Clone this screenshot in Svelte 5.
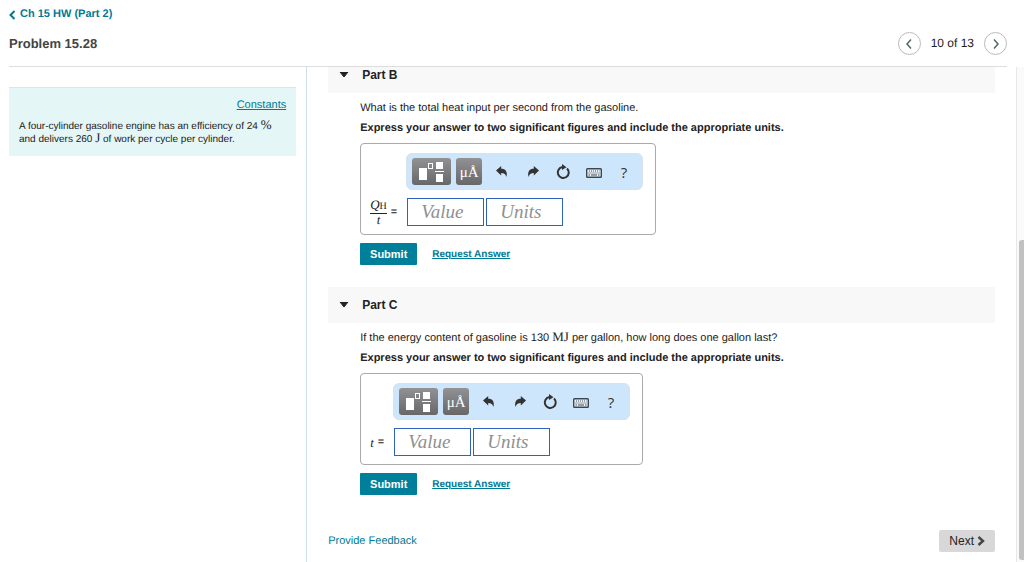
<script>
	const parts = [
		{ id: "b", title: "Part B", fraction: true },
		{ id: "c", title: "Part C", fraction: false }
	];

	let open = $state({ b: true, c: true });
	let answers = $state({
		b: { value: "", units: "" },
		c: { value: "", units: "" }
	});

	function clear(id) {
		answers[id] = { value: "", units: "" };
	}
</script>

{#snippet toolbar(id)}
	<div class="toolbar">
		<button class="dark wide" aria-label="Templates">
			<svg width="28" height="24" viewBox="0 0 28 24" fill="#fff">
				<rect x="1" y="8" width="8" height="12" />
				<rect x="10.5" y="3.5" width="4" height="5" fill="none" stroke="#fff" />
				<rect x="18" y="2" width="7" height="7" />
				<rect x="17" y="11" width="9" height="1" />
				<rect x="18" y="14" width="7" height="8" />
			</svg>
		</button>
		<button class="dark" aria-label="Units">μÅ</button>
		<button class="tool" aria-label="Undo">
			<svg width="16" height="16" viewBox="0 0 16 16">
				<path d="M2 6.5 7.2 2v2.7c4.2 0 6.5 2.600 5.300 8.300-.8-2.700-2.300-3.900-5.300-3.900v2.400z" fill="#333" />
			</svg>
		</button>
		<button class="tool" aria-label="Redo">
			<svg width="16" height="16" viewBox="0 0 16 16">
				<path d="M14 6.500 8.800 2v2.700C4.600 4.700 2.300 7.300 3.500 13c.8-2.700 2.300-3.900 5.300-3.900v2.400z" fill="#333" />
			</svg>
		</button>
		<button class="tool" aria-label="Reset" onclick={() => clear(id)}>
			<svg width="16" height="16" viewBox="0 0 16 16">
				<path d="M12 4.400A5.500 5.500 0 1 1 7.500 3" fill="none" stroke="#333" stroke-width="2" />
				<path d="M7 0v6l4.500-2.700z" fill="#333" />
			</svg>
		</button>
		<button class="tool" aria-label="Keyboard shortcuts">
			<svg width="16" height="16" viewBox="0 0 16 16">
				<rect x=".7" y="4.700" width="14.600" height="8.600" rx=".8" fill="#eef6fd" stroke="#3a4650" stroke-width="1.400" />
				<path d="M3 7h10.500M2.500 9h11" stroke="#3a4650" stroke-dasharray="1 1" />
				<path d="M2.500 11h1.500M5 11h6M12 11h1.500" stroke="#3a4650" />
			</svg>
		</button>
		<button class="tool help" aria-label="Help">?</button>
	</div>
{/snippet}

<div class="page">
	<header>
		<div>
			<a class="back" href="#assignment">
				<svg width="7" height="10" viewBox="0 0 7 10">
					<path d="M5.500 1 1.500 5l4 4" fill="none" stroke="#007a94" stroke-width="2" />
				</svg>
				Ch 15 HW (Part 2)
			</a>
			<h1>Problem 15.28</h1>
		</div>
		<nav>
			<button class="round" aria-label="Previous problem">
				<svg width="8" height="12" viewBox="0 0 8 12">
					<path d="M6 1.500 2 6l4 4.500" fill="none" stroke="#566" stroke-width="1.500" />
				</svg>
			</button>
			<span>10 of 13</span>
			<button class="round" aria-label="Next problem">
				<svg width="8" height="12" viewBox="0 0 8 12">
					<path d="m2 1.500 4 4.500-4 4.500" fill="none" stroke="#566" stroke-width="1.500" />
				</svg>
			</button>
		</nav>
	</header>

	<div class="body">
		<aside>
			<div class="intro">
				<a href="#constants">Constants</a>
				<p>
					A four-cylinder gasoline engine has an efficiency of 24&nbsp;<span class="math">%</span>
					and delivers 260 <span class="math">J</span> of work per cycle per cylinder.
				</p>
			</div>
		</aside>

		<main>
			{#each parts as part (part.id)}
				<section>
					<h2>
						<button onclick={() => (open[part.id] = !open[part.id])} aria-expanded={open[part.id]}>
							<svg width="10" height="6" viewBox="0 0 10 6"><path d="M1 0h8L5 5z" fill="#222" stroke="#222" stroke-linejoin="round" /></svg>
							{part.title}
						</button>
					</h2>
					{#if open[part.id]}
						<div class="content">
							{#if part.id === "b"}
								<p>What is the total heat input per second from the gasoline.</p>
							{:else}
								<p>
									If the energy content of gasoline is 130 <span class="math">MJ</span> per gallon, how long
									does one gallon last?
								</p>
							{/if}
							<p class="bold">Express your answer to two significant figures and include the appropriate units.</p>
							<div class="answer">
								{@render toolbar(part.id)}
								<label for="value-{part.id}">
									{#if part.fraction}
										<span class="fraction">
											<span><i>Q</i><small>H</small></span>
											<i>t</i>
										</span>
									{:else}
										<i>t</i>
									{/if}
									<span class="equals">=</span>
								</label>
								<div class="fields">
									<input id="value-{part.id}" placeholder="Value" bind:value={answers[part.id].value} />
									<input aria-label="Units" placeholder="Units" bind:value={answers[part.id].units} />
								</div>
							</div>
							<div class="actions">
								<button class="submit">Submit</button>
								<a href="#request-{part.id}">Request Answer</a>
							</div>
						</div>
					{/if}
				</section>
			{/each}

			<footer>
				<a href="#feedback">Provide Feedback</a>
				<button class="next">
					Next
					<svg width="8" height="10" viewBox="0 0 8 10">
						<path d="m1.500 1 4.500 4-4.500 4" fill="none" stroke="#444" stroke-width="2.400" />
					</svg>
				</button>
			</footer>
		</main>

		<div class="track"><div class="thumb"></div></div>
	</div>
</div>

<style>
	:global(body) {
		margin: 0;
		background: #fff;
	}

	.page {
		display: flex;
		flex-direction: column;
		height: 100vh;
		overflow: hidden;
		font: 11px/13px "Liberation Sans", Arial, sans-serif;
		text-rendering: geometricPrecision;
		color: #222;
	}

	button {
		padding: 0;
		border: 0;
		background: none;
		font: inherit;
		color: inherit;
		cursor: pointer;
	}

	svg {
		display: block;
	}

	a {
		color: #007a94;
	}

	p {
		margin: 0;
	}

	header {
		display: flex;
		align-items: flex-start;
		justify-content: space-between;
		margin: 0 17px 0 9px;
		padding: 7px 0 11px;
		border-bottom: 1px solid #ddd;
	}

	.back {
		display: flex;
		align-items: center;
		gap: 4px;
		font-size: 11px;
		line-height: 15px;
		font-weight: bold;
		text-decoration: none;
	}

	h1 {
		margin: 14px 0 0;
		font-size: 13px;
		line-height: 16px;
		color: #444;
	}

	nav {
		display: flex;
		align-items: center;
		gap: 10px;
		padding-top: 25px;
		font-size: 12px;
	}

	.round {
		display: grid;
		place-items: center;
		width: 23px;
		height: 23px;
		border: 1px solid #bbb;
		border-radius: 50%;
	}

	.body {
		display: flex;
		flex: 1;
		min-height: 0;
	}

	aside {
		flex: none;
		box-sizing: border-box;
		width: 30%;
		padding: 20px 10px 0 9px;
		border-right: 1px solid #cfdfe8;
	}

	.intro {
		padding: 11px 10px 10px;
		border-top: 1px solid #dde6e6;
		background: #e5f6f6;
	}

	.intro a {
		display: block;
		margin-bottom: 8px;
		text-align: right;
	}

	.intro p {
		font-size: 10px;
	}

	.math {
		font-family: "Liberation Serif", serif;
		font-size: 13px;
		line-height: 0;
	}

	main {
		flex: 1;
		min-width: 0;
		padding: 0 21px;
		overflow: hidden;
	}

	section {
		margin-bottom: 22px;
	}

	section:first-child {
		margin-top: -10px;
	}

	h2 {
		margin: 0;
		padding: 10px 11px;
		background: #f8f8f8;
		font-size: 12px;
		line-height: 16px;
	}

	h2 button {
		display: flex;
		align-items: center;
		gap: 13px;
	}

	.content {
		padding: 8px 32px 0;
	}

	.content p {
		margin-bottom: 6px;
		line-height: 14px;
	}

	.content .bold {
		margin-bottom: 8px;
		font-weight: bold;
	}

	.answer {
		display: inline-grid;
		grid-template-columns: auto auto;
		column-gap: 9px;
		row-gap: 8px;
		box-sizing: border-box;
		padding: 9px 12px 8px 9px;
		border: 1px solid #aaa;
		border-radius: 4px;
		vertical-align: top;
	}

	.toolbar {
		grid-column: 2;
		display: flex;
		align-items: center;
		box-sizing: border-box;
		width: 237px;
		height: 37px;
		padding: 0 3px 0 5px;
		border: 1px solid #d8e2ea;
		border-radius: 6px;
		background: #cde6fc;
	}

	.dark {
		display: grid;
		place-items: center;
		width: 26px;
		height: 27px;
		margin-right: 5px;
		border-radius: 3px;
		background: linear-gradient(#929295, #67676a);
		font: 15px/20px "Liberation Serif", serif;
		color: #fff;
	}

	.dark.wide {
		width: 39px;
	}

	.tool {
		display: grid;
		flex: 1;
		place-items: center;
	}

	.help {
		font: 15px/18px "Open Sans", sans-serif;
		color: #333;
	}

	label {
		display: flex;
		align-items: center;
		gap: 4px;
	}

	label i,
	small {
		font-family: "Liberation Serif", serif;
		font-size: 13px;
	}

	small {
		font-size: 10px;
	}

	.fraction {
		display: flex;
		flex-direction: column;
		align-items: center;
		line-height: 12px;
	}

	.fraction span {
		border-bottom: 1px solid #222;
	}

	.fields {
		display: flex;
		gap: 2px;
		padding-left: 1px;
	}

	input {
		box-sizing: border-box;
		width: 77px;
		height: 28px;
		padding: 0 13px;
		border: 1px solid #2f62bd;
		border-radius: 0;
		font: italic 19px/24px "Liberation Serif", serif;
		color: #222;
	}

	input::placeholder {
		color: #909090;
		opacity: 1;
	}

	.actions {
		display: flex;
		align-items: center;
		gap: 15px;
		margin-top: 8px;
		font-weight: bold;
	}

	.actions a {
		font-size: 10px;
	}

	.submit {
		width: 57px;
		height: 22px;
		border-radius: 1px;
		background: #007f9b;
		font-size: 11px;
		color: #fff;
	}

	footer {
		display: flex;
		align-items: center;
		justify-content: space-between;
		margin-top: 35px;
	}

	footer a {
		font-size: 11px;
		text-decoration: none;
	}

	.next {
		display: flex;
		align-items: center;
		gap: 3px;
		height: 22px;
		padding: 0 10px;
		border-radius: 2px;
		background: #d8d8d8;
		font-size: 12px;
	}

	.track {
		display: flex;
		flex-direction: column;
		justify-content: flex-end;
		box-sizing: border-box;
		width: 8px;
		padding: 0 0 2px 2px;
		border-left: 1px solid #e7e7e7;
		background: #fafafa;
	}

	.thumb {
		height: 65%;
		border-radius: 3px 0 0 3px;
		background: #c1c1c1;
	}
</style>
